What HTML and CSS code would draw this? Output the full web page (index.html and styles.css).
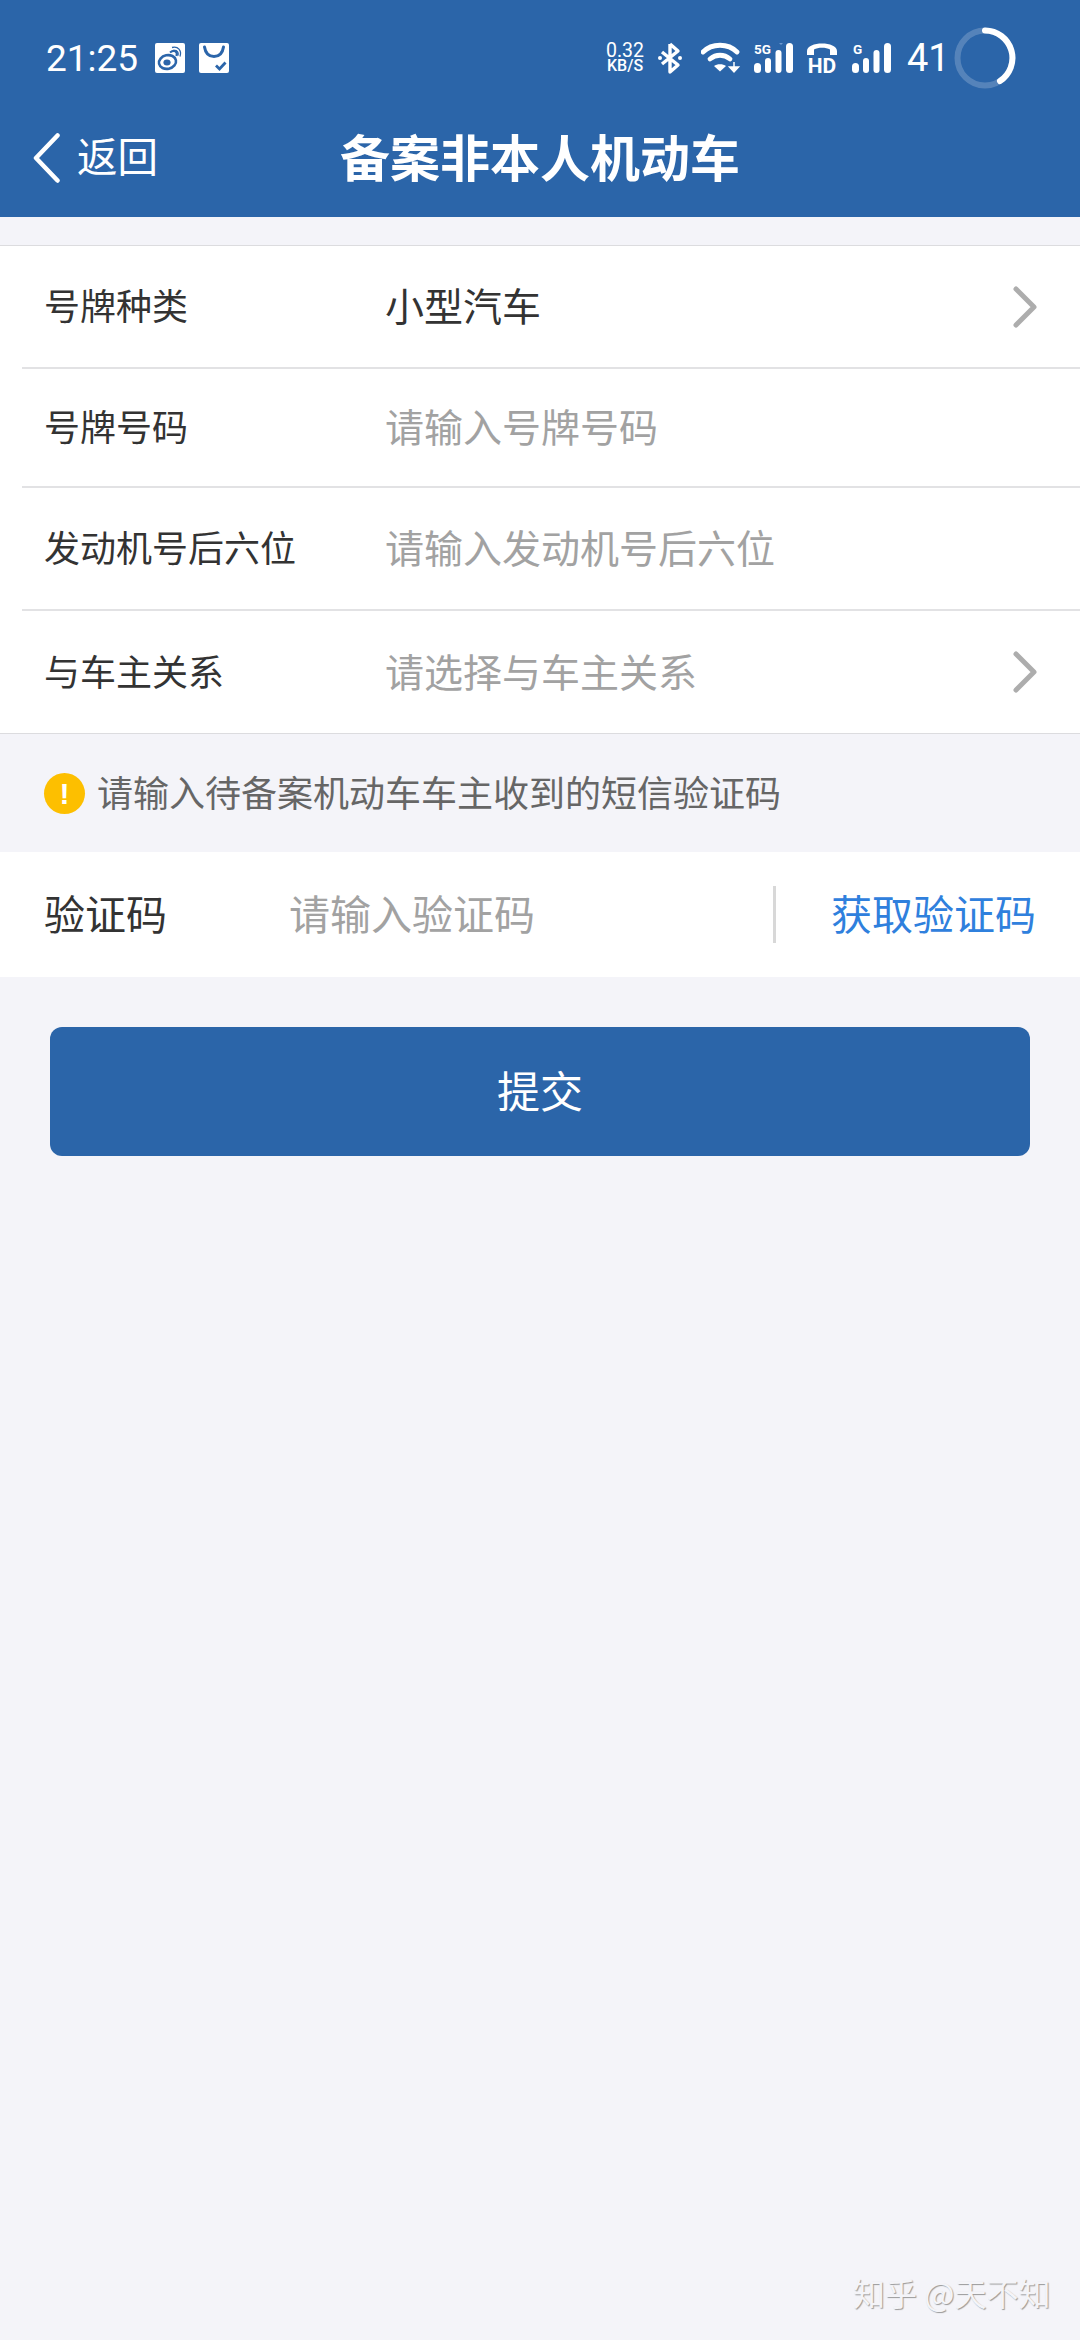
FILE: index.html
```html
<!DOCTYPE html>
<html lang="zh-CN">
<head>
<meta charset="utf-8">
<title>备案非本人机动车</title>
<link rel="stylesheet" href="styles.css">
</head>
<body>
<div class="page">
  <header class="header">
    <div class="status">
      <span class="time">21:25</span>
      <svg class="nicon" viewBox="0 0 30 30"><rect width="30" height="30" rx="2" fill="#fff"/><ellipse cx="12.5" cy="19" rx="8.6" ry="6.8" fill="none" stroke="#2b65aa" stroke-width="2.6" transform="rotate(-12 12.5 19)"/><ellipse cx="12" cy="19.5" rx="3.6" ry="3" fill="#2b65aa"/><path d="M15 9.5c4-3.2 8-1.500 6.500 3.500" fill="none" stroke="#2b65aa" stroke-width="2.2"/><path d="M17 4.500c6-1.600 10 3 8 9M18.500 7.500c3.600-.8 5.500 2 4.600 5" fill="none" stroke="#2b65aa" stroke-width="1.3"/></svg>
      <svg class="nicon" viewBox="0 0 30 30"><rect width="30" height="30" rx="2" fill="#fff"/><path d="M5.500 4c1 6.500 4.500 9.500 9.500 9.500S23.500 10.500 24.500 4" fill="none" stroke="#2b65aa" stroke-width="3" stroke-linecap="round"/><path d="M17 22.500l3.500 3.500 6-6.500" fill="none" stroke="#2b65aa" stroke-width="2.800"/></svg>
      <span class="spacer"></span>
      <span class="speed"><span class="speed-num">0.32</span><span class="speed-unit">KB/S</span></span>
      <svg class="bt" viewBox="0 0 24 32"><path d="M12 2v28l8-7-16-13M12 2l8 7L4 22" fill="none" stroke="#fff" stroke-width="3.400" stroke-linejoin="round"/><circle cx="2" cy="16" r="2" fill="#fff"/><circle cx="22" cy="16" r="2" fill="#fff"/></svg>
      <svg class="wifi" viewBox="0 0 40 32"><path d="M2 10C11 1 27 1 36 10" fill="none" stroke="#fff" stroke-width="4.800" stroke-linecap="round"/><path d="M9 17c6-5 14-5 20 0" fill="none" stroke="#fff" stroke-width="4.800" stroke-linecap="round"/><path d="M13 24c3-2.500 9-2.500 12 0l-6 5.500z" fill="#fff"/><path d="M33 20v5M28.500 25h9L33 30z" fill="#fff" stroke="#fff" stroke-width="1.500"/></svg>
      <svg class="sig" viewBox="0 0 40 32"><text x="0" y="12" class="sig-label">5G</text><path d="M27 3l-2-2h4z" fill="#6f9ad0"/><rect x="0" y="21" width="7" height="10" rx="3.500" fill="#fff"/><rect x="11" y="16" width="6" height="15" rx="3" fill="#fff"/><rect x="21.500" y="8" width="6" height="23" rx="3" fill="#fff"/><rect x="32" y="1" width="7" height="30" rx="3.500" fill="#fff"/></svg>
      <svg class="hd" viewBox="0 0 34 42"><path d="M2 18V14C2 4 32 4 32 14v4h-7V12.500C21 10 13 10 9 12.500V18z" fill="#fff"/><text x="17" y="36" class="hd-label">HD</text></svg>
      <svg class="sig sig-g" viewBox="0 0 40 32"><text x="1" y="12" class="sig-label">G</text><rect x="0" y="21" width="7" height="10" rx="3.500" fill="#fff"/><rect x="11" y="16" width="6" height="15" rx="3" fill="#fff"/><rect x="21.500" y="8" width="6" height="23" rx="3" fill="#fff"/><rect x="32" y="1" width="7" height="30" rx="3.500" fill="#fff"/></svg>
      <span class="batt-num">41</span>
      <svg class="ring" viewBox="0 0 62 62"><circle cx="31" cy="31" r="27.500" fill="none" stroke="#fff" stroke-opacity=".2" stroke-width="6"/><path d="M31 3.500A27.500 27.500 0 0 1 46 54" fill="none" stroke="#fff" stroke-width="6" stroke-linecap="round"/></svg>
    </div>
    <nav class="nav">
      <div class="back">
        <svg class="back-icon" viewBox="0 0 27 50"><path d="M24.500 2.500L3 25l21.500 22.500" fill="none" stroke="#fff" stroke-width="4.500" stroke-linecap="round" stroke-linejoin="round"/></svg>
        <span class="back-text">返回</span>
      </div>
      <h1 class="title">备案非本人机动车</h1>
      <div></div>
    </nav>
  </header>

  <main class="main">
    <section class="form">
      <div class="row row-tall">
        <span class="label">号牌种类</span>
        <span class="value">小型汽车</span>
        <svg class="chev" viewBox="0 0 24 42"><path d="M3 3l18 18L3 39" fill="none" stroke="#adadad" stroke-width="5" stroke-linecap="round" stroke-linejoin="round"/></svg>
      </div>
      <div class="row row-short">
        <span class="label">号牌号码</span>
        <span class="value ph">请输入号牌号码</span>
      </div>
      <div class="row row-tall">
        <span class="label">发动机号后六位</span>
        <span class="value ph">请输入发动机号后六位</span>
      </div>
      <div class="row row-tall row-last">
        <span class="label">与车主关系</span>
        <span class="value ph">请选择与车主关系</span>
        <svg class="chev" viewBox="0 0 24 42"><path d="M3 3l18 18L3 39" fill="none" stroke="#adadad" stroke-width="5" stroke-linecap="round" stroke-linejoin="round"/></svg>
      </div>
    </section>

    <div class="notice">
      <span class="warn">!</span>
      <span class="notice-text">请输入待备案机动车车主收到的短信验证码</span>
    </div>

    <section class="code">
      <span class="code-label">验证码</span>
      <span class="code-input">请输入验证码</span>
      <span class="code-sep"></span>
      <span class="code-link">获取验证码</span>
    </section>

    <button class="submit" type="button">提交</button>
  </main>

  <div class="watermark">知乎 @天不知</div>
</div>
</body>
</html>
```

FILE: styles.css
```css
* { box-sizing: border-box; }
html, body { margin: 0; padding: 0; }
body {
  font-family: "Noto Sans CJK SC", "Noto Sans", sans-serif;
  background: #f4f4f9;
}
.page {
  position: relative;
  width: 1080px;
  height: 2340px;
  overflow: hidden;
  background: #f4f4f9;
}

/* header */
.header { height: 217px; background: #2b65a9; color: #fff; }
.status {
  display: flex;
  align-items: center;
  height: 116px;
  padding: 0 64px 0 46px;
}
.time { font: 400 37px/1 Roboto, sans-serif; width: 109px; }
.nicon { width: 30px; height: 30px; margin-right: 14px; }
.spacer { flex: 1; }
.speed {
  display: flex;
  flex-direction: column;
  align-items: center;
  width: 40px;
  font-family: Roboto, sans-serif;
}
.speed-num { font-size: 19.500px; line-height: 16px; }
.speed-unit { font-size: 16px; line-height: 14px; font-weight: 500; }
.bt { width: 24px; height: 32px; margin-left: 13px; }
.wifi { width: 40px; height: 32px; margin-left: 19px; }
.sig { width: 40px; height: 32px; margin-left: 13px; }
.sig-g { margin-left: 13px; }
.sig-label { font: 700 13.500px Roboto, sans-serif; fill: #fff; }
.hd { width: 34px; height: 42px; margin-left: 11px; }
.hd-label { font: 700 21px Roboto, sans-serif; fill: #fff; text-anchor: middle; }
.batt-num { font: 400 38px/1 Roboto, sans-serif; margin-left: 15px; width: 47px; }
.ring { width: 62px; height: 62px; }

.nav {
  display: grid;
  grid-template-columns: 1fr auto 1fr;
  align-items: center;
  height: 84px;
}
.back {
  display: flex;
  align-items: center;
  padding-left: 33px;
  font-size: 40.500px;
  line-height: 1;
}
.back-icon { width: 27px; height: 50px; margin-right: 17px; }
.back-text { margin-bottom: 5px; }
.title { margin: 0 0 7px; font-size: 50px; font-weight: 700; line-height: 1; }

/* form */
.main { padding-top: 28px; }
.form {
  background: #fff;
  border-top: 1px solid #dcdcdf;
  border-bottom: 1px solid #dcdcdf;
}
.row {
  display: flex;
  align-items: center;
  margin-left: 22px;
  padding: 0 43px 0 22px;
  border-bottom: 2px solid #e2e2e4;
}
.row-tall { height: 123px; }
.row-short { height: 119px; }
.row-last { height: 122px; border-bottom: 0; }
.label { width: 341px; margin-bottom: 5px; font-size: 36px; color: #333; }
.value { flex: 1; margin-bottom: 5px; font-size: 39px; color: #333; }
.ph { color: #a2a2a2; }
.chev { width: 24px; height: 42px; }

/* notice */
.notice {
  display: flex;
  align-items: center;
  height: 118px;
  padding-left: 44px;
  font-size: 36px;
  color: #666;
}
.notice-text { margin-bottom: 5px; }
.warn {
  flex: none;
  width: 41px;
  height: 41px;
  margin-right: 12px;
  border-radius: 50%;
  background: #fdbf00;
  color: #fff;
  font: 700 30px/41px "Liberation Sans", sans-serif;
  text-align: center;
}

/* code */
.code {
  display: flex;
  align-items: center;
  height: 125px;
  padding: 0 44px 0 44px;
  background: #fff;
  font-size: 41px;
}
.code-label { width: 245px; margin-bottom: 5px; color: #333; }
.code-input { flex: 1; margin-bottom: 5px; color: #a2a2a2; }
.code-sep { width: 3px; height: 57px; margin-right: 55px; background: #d8d8d8; }
.code-link { margin-bottom: 5px; color: #2f80dd; }

/* submit */
.submit {
  display: block;
  width: 980px;
  height: 129px;
  margin: 50px 50px 0;
  padding: 0 0 5px;
  border: 0;
  border-radius: 12px;
  background: #2b65a9;
  color: #fff;
  font: 400 43px "Noto Sans CJK SC", sans-serif;
}

.watermark {
  position: absolute;
  left: 853px;
  top: 2269px;
  font-size: 32px;
  line-height: 46px;
  white-space: nowrap;
  color: #f4f4f8;
  text-shadow: 1px 1px 1px #9a9a9a;
}
```
